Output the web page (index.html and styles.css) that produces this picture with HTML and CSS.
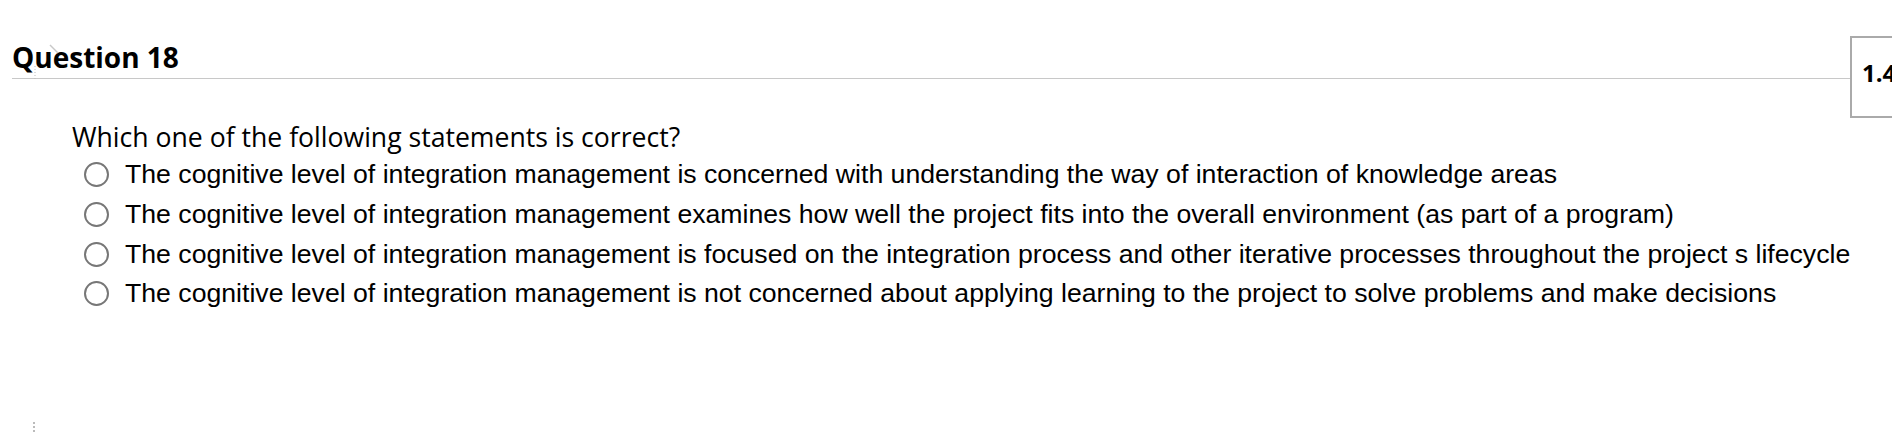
FILE: index.html
```html
<!DOCTYPE html>
<html>
<head>
<meta charset="utf-8">
<link rel="stylesheet" href="styles.css">
</head>
<body>
<div class="page">
  <div class="qhead">
    <div class="qtitle"><h2>Question 18</h2></div>
    <div class="points">1.4</div>
  </div>
  <div class="qbody">
    <p class="prompt">Which one of the following statements is correct?</p>
    <ul class="options">
      <li><span class="radio"></span><span>The cognitive level of integration management is concerned with understanding the way of interaction of knowledge areas</span></li>
      <li><span class="radio"></span><span>The cognitive level of integration management examines how well the project fits into the overall environment (as part of a program)</span></li>
      <li><span class="radio"></span><span>The cognitive level of integration management is focused on the integration process and other iterative processes throughout the project s lifecycle</span></li>
      <li><span class="radio"></span><span>The cognitive level of integration management is not concerned about applying learning to the project to solve problems and make decisions</span></li>
    </ul>
  </div>
  <svg class="mark" width="40" height="40" viewBox="0 0 40 40"><line x1="19" y1="1" x2="27" y2="9" stroke="#c8c8c8" stroke-width="1.5"/><line x1="4" y1="22" x2="4" y2="36" stroke="#bbb" stroke-width="1" stroke-dasharray="1 2"/></svg>
  <div class="grip"><i></i><i></i><i></i></div>
</div>
</body>
</html>
```
FILE: styles.css
```css
html, body {
  margin: 0;
  padding: 0;
  background: #fff;
}
.page {
  width: 1892px;
  height: 434px;
  overflow: hidden;
  position: relative;
  font-family: "Open Sans", sans-serif;
  color: #000;
}
.qhead {
  display: flex;
  align-items: flex-start;
}
.qtitle {
  flex: 1;
  margin-left: 12px;
  height: 79px;
  border-bottom: 1px solid #c8c8c8;
  box-sizing: border-box;
  display: flex;
  align-items: flex-end;
}
.qtitle h2 {
  margin: 0 0 2px 0;
  font-size: 28px;
  font-weight: 700;
  line-height: 38px;
}
.points {
  margin-top: 36px;
  height: 82px;
  box-sizing: border-box;
  border: 2px solid #aaa;
  border-right: none;
  width: 80px;
  flex: none;
  margin-right: -38px;
  padding: 22px 0 0 10px;
  font-weight: 700;
  font-size: 24px;
  line-height: 26px;
}
.qbody {
  padding-left: 72px;
}
.prompt {
  margin: 0;
  padding-top: 2px;
  font-size: 26.6px;
  line-height: 35px;
}
.options {
  list-style: none;
  margin: 0;
  padding: 0 0 0 12px;
  font-family: "Liberation Sans", Arial, sans-serif;
  font-size: 26.65px;
}
.options li {
  display: flex;
  align-items: center;
  height: 39.7px;
  gap: 16px;
}
.radio {
  width: 25px;
  height: 25px;
  border: 2px solid #777;
  border-radius: 50%;
  box-sizing: border-box;
  flex: none;
}
.mark {
  position: absolute;
  left: 31px;
  top: 44px;
}
.grip {
  position: absolute;
  left: 33px;
  top: 422px;
  display: flex;
  flex-direction: column;
  gap: 2px;
}
.grip i {
  width: 2px;
  height: 2px;
  background: #bbb;
}
```
